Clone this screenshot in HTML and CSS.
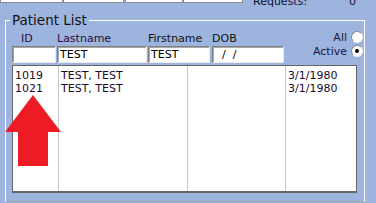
FILE: index.html
```html
<!DOCTYPE html>
<html lang="en">
<head>
  <meta charset="UTF-8" />
  <title>Patient List</title>
  <link rel="stylesheet" href="styles.css">
</head>
<body>
  <div class="topbar">
    <div class="tab w1"></div>
    <div class="tab w2"></div>
    <div class="tab w3"></div>
    <div class="tab w4"></div>
    <span class="req">Requests:</span>
    <span class="count">0</span>
  </div>

  <fieldset class="patients">
    <legend>Patient List</legend>

    <div class="filters">
      <div class="search">
        <label class="hd hd-id">ID</label>
        <label class="hd hd-purple">Lastname</label>
        <label class="hd">Firstname</label>
        <label class="hd">DOB</label>
        <input class="box w-id" type="text" value="">
        <input class="box w-last" type="text" value="TEST">
        <input class="box w-first" type="text" value="TEST">
        <input class="box w-dob" type="text" value="  /  /">
      </div>

      <div class="scope">
        <div class="opt"><span>All</span><span class="radio"></span></div>
        <div class="opt"><span>Active</span><span class="radio on"></span></div>
      </div>
    </div>

    <!-- results -->
    <div class="list">
      <div class="col c-id">
        <div class="cell">1019</div>
        <div class="cell">1021</div>
      </div>
      <div class="col c-name">
        <div class="cell">TEST, TEST</div>
        <div class="cell">TEST, TEST</div>
      </div>
      <div class="col c-first"></div>
      <div class="col c-dob">
        <div class="cell">3/1/1980</div>
        <div class="cell">3/1/1980</div>
      </div>
    </div>
  </fieldset>

  <svg class="arrow" width="56" height="71" viewBox="0 0 56 71">
    <polygon points="28,0 56,37 43,37 43,71 13,71 13,37 0,37" fill="#ed1c24"/>
  </svg>
</body>
</html>
```

FILE: styles.css
```css
* {
  box-sizing: border-box;
}
body {
  margin: 0;
  width: 376px;
  height: 203px;
  overflow: hidden;
  background: #9db5de;
  font-family: 'DejaVu Sans', Verdana, sans-serif;
  font-size: 11px;
  color: #111;
  position: relative;
}
.topbar {
  display: flex;
  align-items: flex-start;
  height: 12px;
}
.tab {
  height: 3px;
  background: #fff;
  border: 1px solid #8c8c8c;
  border-top: none;
}
.w1 { width: 63px; }
.w2 { width: 61px; }
.w3 { width: 58px; margin-left: 1px; }
.w4 { width: 60px; }
.req,
.count {
  line-height: 13px;
  margin-top: -5px;
  color: #101030;
}
.req {
  margin-left: 10px;
}
.count {
  margin-left: auto;
  margin-right: 20px;
}

.patients {
  width: 360px;
  margin: 0 0 0 5px;
  padding: 0 1px 8px 6px;
  border: 1px solid #fff;
  border-bottom-color: #a3a3a3;
  min-inline-size: 0;
}
.patients legend {
  font-size: 13.5px;
  line-height: 16px;
  padding: 0 2px;
  margin-left: -2px;
  color: #111;
}

.filters {
  display: flex;
  padding-top: 4px;
}
.search {
  display: grid;
  grid-template-columns: 45px 91px 64px 72px;
  row-gap: 1px;
}
.hd {
  line-height: 13px;
  color: #111;
}
.hd-id {
  padding-left: 9px;
  color: #2a0a3a;
}
.hd-purple {
  color: #2a0a3a;
}
.box {
  height: 17px;
  margin: 0;
  padding: 0 2px;
  font-family: 'DejaVu Sans', Verdana, sans-serif;
  font-size: 11px;
  color: #000;
  background: #fff;
  border: 1px solid;
  border-color: #808080 #ececec #ececec #808080;
  box-shadow: inset 1px 1px #a8a8a8;
  outline: none;
  white-space: pre;
}
.w-id { width: 44px; }
.w-last { width: 90px; }
.w-first { width: 62px; }
.w-dob { width: 72px; }

.scope {
  margin-left: auto;
  margin-top: -1px;
  display: flex;
  flex-direction: column;
  gap: 2px;
}
.opt {
  display: flex;
  justify-content: flex-end;
  align-items: center;
  gap: 4px;
  height: 12px;
  color: #14143c;
}
.radio {
  width: 12px;
  height: 12px;
  border-radius: 50%;
  background: #fff;
  border: 1px solid;
  border-color: #8a8a8a #f4f4f4 #f4f4f4 #8a8a8a;
  display: flex;
  justify-content: center;
  align-items: center;
}
.radio.on::after {
  content: "";
  width: 4px;
  height: 4px;
  border-radius: 50%;
  background: #000;
}

.list {
  display: flex;
  width: 345px;
  height: 128px;
  margin-top: 2px;
  background: #fff;
  border: 1px solid #666;
  border-bottom-width: 2px;
}
.col {
  padding-top: 3px;
  border-right: 1px solid #c8c8c8;
}
.c-id { width: 46px; }
.c-name { width: 129px; }
.c-first { width: 98px; }
.c-dob { flex: 1; border-right: none; }
.cell {
  line-height: 13px;
  padding-left: 2px;
  color: #1a0a2a;
  white-space: nowrap;
}

.arrow {
  position: absolute;
  left: 5px;
  top: 95px;
}
```
